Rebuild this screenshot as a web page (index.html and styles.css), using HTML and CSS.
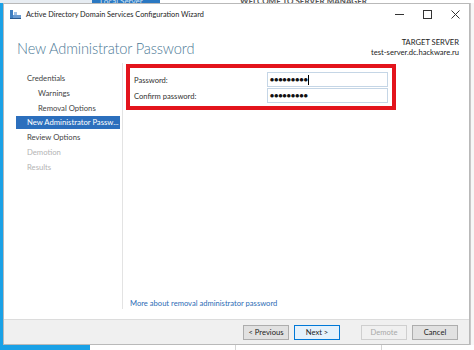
FILE: index.html
```html
<!DOCTYPE html>
<html lang="en">
  <head>
    <meta charset="UTF-8" />
    <meta name="viewport" content="width=device-width, initial-scale=1" />
    <title>Active Directory Domain Services Configuration Wizard</title>
    <link rel="stylesheet" href="styles.css">
  </head>

  <body>
    <div class="screen">
      <!-- Server Manager behind the wizard -->
      <div class="backdrop-top">
        <div class="bt-left"></div>
        <div class="bt-local">Local Server</div>
        <div class="bt-welcome">WELCOME TO SERVER MANAGER</div>
      </div>
      <div class="backdrop-left"></div>

      <!-- Wizard window -->
      <div class="wizard">
        <div class="titlebar">
          <svg class="app-icon" width="11" height="9" viewBox="0 0 11 9">
            <rect x="0" y="0" width="3" height="8" fill="#3f7fc1" />
            <rect x="3" y="5" width="8" height="3" fill="#6a9bd1" />
            <rect x="4" y="2" width="3" height="3" fill="#9dbfe4" />
            <rect x="0" y="8" width="11" height="1" fill="#26588f" />
          </svg>
          <span class="title-text">Active Directory Domain Services Configuration Wizard</span>
          <div class="controls">
            <span class="ctl">
              <svg width="9" height="9" viewBox="0 0 9 9"><line x1="0" y1="4.5" x2="9" y2="4.5" stroke="#333" stroke-width="1" /></svg>
            </span>
            <span class="ctl">
              <svg width="9" height="9" viewBox="0 0 9 9"><rect x="0.5" y="0.5" width="8" height="8" fill="none" stroke="#333" stroke-width="1" /></svg>
            </span>
            <span class="ctl">
              <svg width="9" height="9" viewBox="0 0 9 9"><path d="M0.5 0.5 L8.5 8.5 M8.5 0.5 L0.5 8.5" stroke="#333" stroke-width="1" /></svg>
            </span>
          </div>
        </div>

        <div class="header">
          <h1>New Administrator Password</h1>
          <div class="target">
            <div>TARGET SERVER</div>
            <div>test-server.dc.hackware.ru</div>
          </div>
        </div>

        <div class="main">
          <ul class="steps">
            <li>Credentials</li>
            <li class="sub">Warnings</li>
            <li class="sub">Removal Options</li>
            <li class="active">New Administrator Passw...</li>
            <li>Review Options</li>
            <li class="disabled">Demotion</li>
            <li class="disabled">Results</li>
          </ul>

          <div class="content">
            <div class="highlight-box">
              <div class="form-row">
                <label>Password:</label>
                <div class="field">●●●●●●●●●<span class="caret"></span></div>
              </div>
              <div class="form-row">
                <label>Confirm password:</label>
                <div class="field">●●●●●●●●●</div>
              </div>
            </div>
            <a class="more-link" href="#">More about removal administrator password</a>
          </div>
        </div>

        <div class="footer">
          <button class="btn">&lt; Previous</button>
          <button class="btn btn-focus">Next &gt;</button>
          <button class="btn btn-gap" disabled>Demote</button>
          <button class="btn">Cancel</button>
        </div>
      </div>

      <div class="backdrop-right"></div>
      <div class="backdrop-bottom">
        <div class="bb-blue"></div>
        <div class="bb-cell"></div>
        <div class="bb-cell"></div>
      </div>
    </div>
  </body>
</html>
```

FILE: styles.css
```css
/* Global Styles */
body {
  margin: 0;
  padding: 0;
  background-color: #fff;
  font-family: 'Lato', 'Noto Sans', sans-serif;
  color: #1e1e1e;
}

.screen {
  width: 474px;
  height: 350px;
  display: grid;
  grid-template-columns: 3px 467px 4px;
  grid-template-rows: 3px 342px 5px;
  overflow: hidden;
}

/* Backdrop (Server Manager) */
.backdrop-top {
  grid-column: 1 / 4;
  display: flex;
  overflow: hidden;
  font-size: 8px;
  line-height: 3px;
  white-space: nowrap;
}

.bt-left {
  width: 92px;
  background: #e6ecf2;
}

.bt-local {
  width: 68px;
  background: #2a78c2;
  color: #cfe2f5;
  padding-left: 8px;
  box-sizing: border-box;
}

.bt-welcome {
  flex: 1;
  padding-left: 80px;
  color: #555;
  font-weight: bold;
}

.backdrop-left {
  background: #1aa1e6;
}

.backdrop-right {
  background: #f7f7f7;
  border-left: 1px solid #c8c8c8;
}

.backdrop-bottom {
  grid-column: 1 / 4;
  display: flex;
  background: #fff;
}

.bb-blue {
  width: 90px;
  background: #1aa1e6;
}

.bb-cell {
  width: 145px;
  border-right: 1px solid #d4d4d4;
}

/* Wizard window */
.wizard {
  display: flex;
  flex-direction: column;
  background: #fff;
  border: 1px solid #b9b9b9;
  box-sizing: border-box;
}

.titlebar {
  height: 20px;
  display: flex;
  align-items: center;
  padding-left: 6px;
}

.app-icon {
  margin-right: 5px;
}

.title-text {
  font-size: 7.3px;
  color: #222;
}

.controls {
  margin-left: auto;
  display: flex;
  height: 100%;
}

.ctl {
  width: 28px;
  display: flex;
  align-items: center;
  justify-content: center;
}

.header {
  height: 39px;
  display: flex;
  justify-content: space-between;
  padding: 0 10px 0 13px;
}

.header h1 {
  margin: 15px 0 0;
  font-weight: 300;
  font-size: 14.6px;
  letter-spacing: -0.15px;
  color: #4c7996;
  line-height: 20px;
}

.target {
  margin-top: 13px;
  text-align: right;
  font-size: 7.6px;
  line-height: 10px;
  color: #222;
}

.main {
  flex: 1;
  display: flex;
}

/* Step list */
.steps {
  list-style: none;
  width: 106px;
  margin: 0 0 10px 12px;
  padding: 9px 0 0;
  border-right: 1px solid #e3e3e3;
  font-size: 7.7px;
  color: #444;
}

.steps li {
  height: 13px;
  line-height: 13px;
  margin-bottom: 1.8px;
  padding-left: 11px;
  white-space: nowrap;
}

.steps li.sub {
  padding-left: 22px;
}

.steps li.active {
  background: #2c6fbd;
  color: #fff;
  margin-right: 2px;
}

.steps li.disabled {
  color: #b4b4b4;
}

/* Content */
.content {
  flex: 1;
  display: flex;
  flex-direction: column;
  padding: 1px 0 0 3px;
}

.highlight-box {
  width: 270px;
  box-sizing: border-box;
  border: 4px solid #e3141c;
  padding: 4px 4px 3px 4px;
  display: flex;
  flex-direction: column;
  gap: 1px;
}

.form-row {
  display: flex;
  align-items: center;
  justify-content: space-between;
}

.form-row label {
  font-size: 7.6px;
  color: #333;
}

.field {
  width: 121px;
  height: 15px;
  box-sizing: border-box;
  border: 1px solid #c5d6e6;
  font-family: 'DejaVu Sans', sans-serif;
  font-size: 4.6px;
  letter-spacing: 0.2px;
  line-height: 13px;
  padding-left: 2px;
  display: flex;
  align-items: center;
  color: #111;
}

.caret {
  width: 1px;
  height: 10px;
  background: #000;
}

.more-link {
  margin-top: auto;
  margin-bottom: 11px;
  padding-left: 4px;
  font-size: 7.6px;
  color: #2d6cb5;
  text-decoration: none;
}

/* Footer */
.footer {
  height: 25px;
  display: flex;
  align-items: center;
  justify-content: flex-end;
  gap: 5px;
  padding-right: 11px;
  background: #f0f0f0;
  border-top: 1px solid #dcdcdc;
  box-sizing: border-box;
}

.btn {
  width: 46px;
  height: 15px;
  padding: 0;
  font-family: 'Lato', 'Noto Sans', sans-serif;
  font-size: 7.6px;
  color: #222;
  background: #e1e1e1;
  border: 1px solid #adadad;
}

.btn-focus {
  background: #e5f1fb;
  border-color: #0078d7;
}

.btn-gap {
  margin-left: 16px;
}

.btn:disabled {
  background: #f0f0f0;
  border-color: #cfcfcf;
  color: #a8a8a8;
}
```
